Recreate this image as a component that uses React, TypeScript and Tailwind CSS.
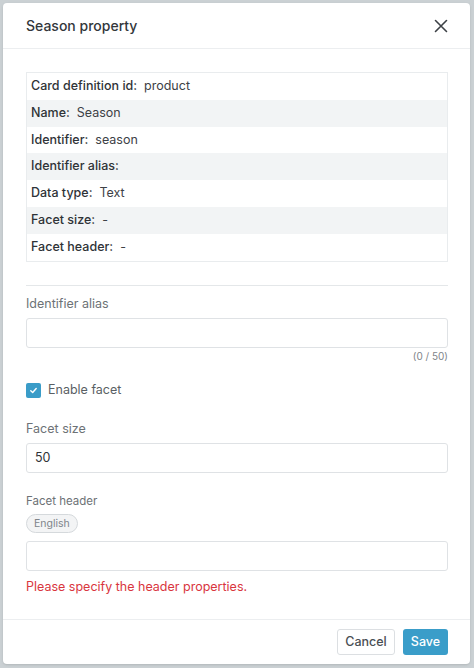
import React from "react";

const rows: { label: string; value: string }[] = [
  { label: "Card definition id:", value: "product" },
  { label: "Name:", value: "Season" },
  { label: "Identifier:", value: "season" },
  { label: "Identifier alias:", value: "" },
  { label: "Data type:", value: "Text" },
  { label: "Facet size:", value: "-" },
  { label: "Facet header:", value: "-" },
];

function CloseIcon() {
  return (
    <svg width="14" height="14" viewBox="0 0 14 14" fill="none">
      <path d="M1.5 1.5L12.5 12.5M12.5 1.5L1.5 12.5" stroke="#3d4146" strokeWidth="1.6" strokeLinecap="round" />
    </svg>
  );
}

export default function App() {
  return (
    <div
      className="w-[474px] h-[668px] bg-[#cbd1d4] pt-[3px] pl-[3px] overflow-hidden"
      style={{ fontFamily: "Inter, 'Noto Sans', sans-serif" }}
    >
      <div className="w-[467px] h-[661px] bg-white rounded-[4px] shadow-sm flex flex-col">
        {/* header */}
        <div className="h-[46px] flex items-center justify-between pl-[23px] pr-[21px] border-b border-[#eceef0] shrink-0">
          <h2 className="text-[14px] font-medium text-[#33373b]">Season property</h2>
          <button className="w-[16px] h-[16px] flex items-center justify-center">
            <CloseIcon />
          </button>
        </div>

        {/* body */}
        <div className="flex-1 pl-[23px] pr-[22px] pt-[23px]">
          <div className="border border-[#e9ecee]">
            {rows.map((r, i) => (
              <div
                key={r.label}
                className={`h-[26.8px] flex items-center px-[4px] text-[12.5px] text-[#2f3337] ${
                  i % 2 === 1 ? "bg-[#f2f4f5]" : "bg-white"
                }`}
              >
                <span className="font-medium">{r.label}</span>
                {r.value && <span className="ml-[7px] text-[#3d4146]">{r.value}</span>}
              </div>
            ))}
          </div>

          <div className="mt-[23px] border-t border-[#e4e7e9]" />

          <label className="block mt-[10px] text-[12.5px] leading-4 text-[#6d7276]">Identifier alias</label>
          <input className="mt-[6px] w-full h-[30px] border border-[#dfe2e5] rounded-[3px] outline-none px-[8px] text-[13px]" />
          <div className="mt-[2px] text-right text-[10px] leading-[12px] text-[#80858a]">(0 / 50)</div>

          <div className="mt-[21px] flex items-center h-[16px]">
            <span className="w-[15px] h-[15px] rounded-[2px] bg-[#3a9cc8] flex items-center justify-center">
              <svg width="9" height="9" viewBox="0 0 10 10" fill="none">
                <path d="M2 5.2L4.1 7.2L8 2.8" stroke="white" strokeWidth="1.6" strokeLinecap="round" strokeLinejoin="round" />
              </svg>
            </span>
            <span className="ml-[7px] text-[12.5px] text-[#5a5f64]">Enable facet</span>
          </div>

          <label className="block mt-[22px] text-[12.5px] leading-4 text-[#6d7276]">Facet size</label>
          <input
            defaultValue="50"
            className="mt-[6px] w-full h-[30px] border border-[#dfe2e5] rounded-[3px] outline-none px-[8px] text-[12.5px] text-[#2f3337]"
          />

          <label className="block mt-[20px] text-[11.5px] leading-4 text-[#6d7276]">Facet header</label>
          <span className="mt-[5px] inline-flex items-center h-[19px] px-[7px] rounded-full border border-[#d5d9dc] bg-[#f3f4f5] text-[10.5px] text-[#80858a]">
            English
          </span>
          <input className="block mt-[8px] w-full h-[30px] border border-[#dfe2e5] rounded-[3px] outline-none px-[8px] text-[13px]" />
          <div className="mt-[8px] text-[12.5px] leading-4 text-[#d9363e]">Please specify the header properties.</div>
        </div>

        {/* footer */}
        <div className="h-[45px] shrink-0 border-t border-[#eceef0] flex items-center justify-end gap-[8px] pr-[22px]">
          <button className="h-[26px] w-[58px] border border-[#dcdfe2] rounded-[3px] bg-white text-[12.5px] font-medium text-[#4a4f54]">
            Cancel
          </button>
          <button className="h-[26px] w-[45px] rounded-[3px] bg-[#3a9dc9] text-[12.5px] font-medium text-white">
            Save
          </button>
        </div>
      </div>
    </div>
  );
}
